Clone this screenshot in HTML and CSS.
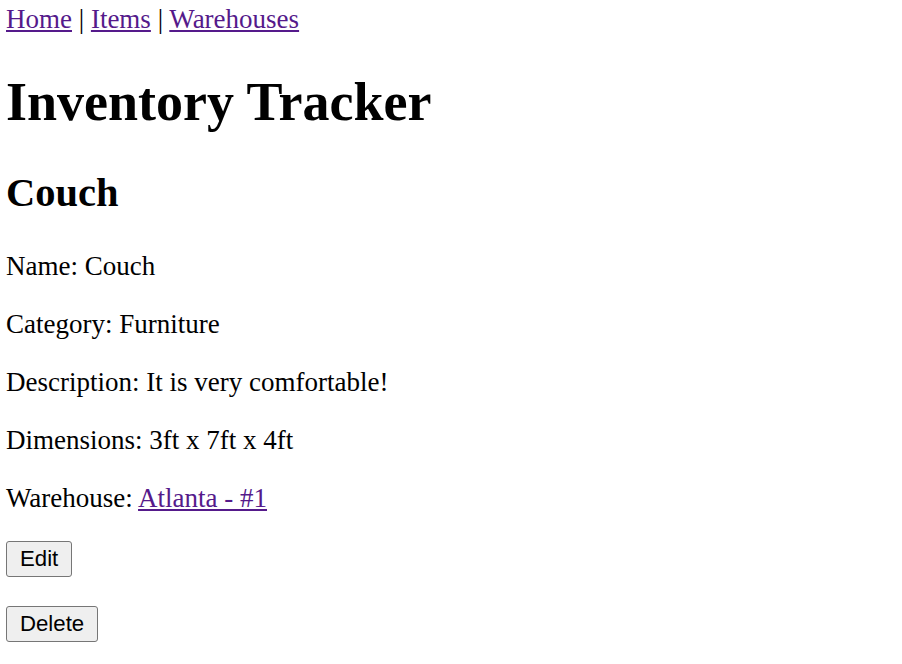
FILE: index.html
```html
<!DOCTYPE html>
<html lang="en">
<head>
<meta charset="utf-8">
<title>Inventory Tracker</title>
<link rel="stylesheet" href="styles.css">
</head>
<body>
<div class="nav"><a href="#">Home</a> | <a href="#">Items</a> | <a href="#">Warehouses</a></div>
<h1 class="title">Inventory Tracker</h1>
<h2 class="item-name">Couch</h2>
<p class="field">Name: Couch</p>
<p class="field">Category: Furniture</p>
<p class="field">Description: It is very comfortable!</p>
<p class="field">Dimensions: 3ft x 7ft x 4ft</p>
<p class="field">Warehouse: <a href="#">Atlanta - #1</a></p>
<form class="action"><button type="button" class="btn">Edit</button></form>
<form class="action"><button type="button" class="btn">Delete</button></form>
</body>
</html>
```
FILE: styles.css
```css
html, body {
  background: #ffffff;
}
body {
  margin: 0;
  padding: 4px 6px 0 6px;
  font-family: "Liberation Serif", "Times New Roman", serif;
  font-size: 27px;
  color: #000000;
}
a {
  color: #551a8b;
  text-decoration: underline;
}
.nav {
  line-height: normal;
}
.title {
  font-size: 2em;
  font-weight: bold;
  margin: 0.67em 0;
}
.item-name {
  font-size: 1.5em;
  font-weight: bold;
  margin: 0.83em 0 calc(0.83em + 1px) 0;
}
.field {
  margin: 1em 0;
}
.action {
  margin: 0 0 29px 0;
}
.btn {
  font-family: "Liberation Sans", Arial, sans-serif;
  font-size: 22.2px;
  color: #000000;
  background: #efefef;
  border: 1px solid #767676;
  border-radius: 3px;
  padding: 0 13px;
  height: 36px;
  box-sizing: border-box;
  line-height: normal;
  vertical-align: top;
}
```
